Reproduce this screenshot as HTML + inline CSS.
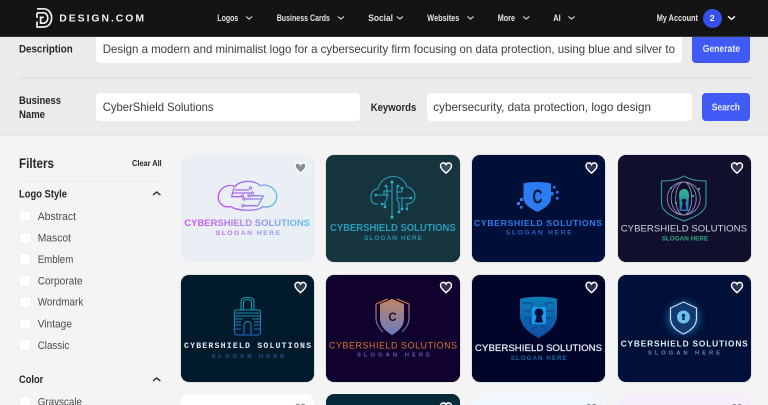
<!DOCTYPE html>
<html><head><meta charset="utf-8">
<style>
*{box-sizing:border-box;margin:0;padding:0}
html,body{width:768px;height:405px;overflow:hidden;background:#f4f4f4;font-family:"Liberation Sans",sans-serif}
#root{position:relative;width:768px;height:405px;overflow:hidden;background:#f4f4f4}
.a{position:absolute;white-space:nowrap}
#top{position:absolute;left:0;top:0;width:768px;height:136px;background:#ebebeb;border-bottom:1px solid #e4e4e4}
#nav{position:absolute;left:0;top:0;width:768px;height:36.500px;background:#141414;border-bottom:1px solid #333}
.in{position:absolute;background:#fff;border-radius:4px}
.bt{position:absolute;background:#3f5af5;border-radius:4px}
.cb{position:absolute;left:19px;width:12px;height:12px;background:#fff;border:1px solid #eee;border-radius:2px}
.c{position:absolute;border-radius:8px;width:134px;height:107px;box-shadow:0 0 0 .5px rgba(120,120,130,.3)}
.c3{height:11px;border-radius:8px 8px 0 0}
svg{position:absolute;left:0;top:0;width:768px;height:405px;overflow:hidden}
text{font-family:"Liberation Sans",sans-serif;font-weight:bold}
.r{font-weight:normal}
.ip{font-size:12px;fill:#3c3c3c;font-weight:normal}
.nv{font-size:8.800px;fill:#e4e4e4}
.lb{font-size:11px;fill:#262626}
.ft{font-size:10.800px;fill:#4c4c4c;font-weight:normal}
</style></head><body>
<div id="root">
<div id="top"></div>
<div class="in" style="left:96px;top:33px;width:586px;height:29.500px"></div>
<div class="bt" style="left:692px;top:33px;width:58px;height:29.500px"></div>
<div class="a" style="left:19px;top:77px;width:731px;height:2px;background:#e2e2e2"></div>
<div class="in" style="left:96px;top:93px;width:264px;height:27.500px"></div>
<div class="in" style="left:426.500px;top:93px;width:265px;height:27.500px"></div>
<div class="bt" style="left:701.500px;top:93px;width:48.500px;height:27.500px"></div>
<div id="nav"></div>
<div class="a" style="left:703px;top:8.500px;width:19px;height:19px;border-radius:50%;background:#3650ec"></div>
<div class="a" style="left:19px;top:181px;width:143px;height:1px;background:#ebebeb"></div>
<div class="cb" style="top:210px"></div>
<div class="cb" style="top:232px"></div>
<div class="cb" style="top:253px"></div>
<div class="cb" style="top:275px"></div>
<div class="cb" style="top:296px"></div>
<div class="cb" style="top:318px"></div>
<div class="cb" style="top:339px"></div>
<div class="cb" style="top:396px;height:9px;border-bottom:0;border-radius:2px 2px 0 0"></div>

<div class="c" style="left:181px;top:155px;background:#e9eff5;box-shadow:none"></div>
<div class="c" style="left:326px;top:155px;background:#15343e"></div>
<div class="c" style="left:472px;top:155px;background:#000f38;width:133px"></div>
<div class="c" style="left:618px;top:155px;background:#11102c;width:133px"></div>
<div class="c" style="left:181px;top:275px;background:#021b2c;width:133px"></div>
<div class="c" style="left:326px;top:275px;background:#10012e"></div>
<div class="c" style="left:472px;top:275px;background:#010529;width:133px"></div>
<div class="c" style="left:618px;top:275px;background:#001038;width:133px"></div>
<div class="c c3" style="left:181px;top:394px;background:#fff;width:133px;box-shadow:none"></div>
<div class="c c3" style="left:326px;top:394px;background:#062a3a;box-shadow:none"></div>
<div class="c c3" style="left:472px;top:394px;background:#eef8fe;width:133px;box-shadow:none"></div>
<div class="c c3" style="left:618px;top:394px;background:#f6edfb;width:133px;box-shadow:none"></div>

<svg width="768" height="405" viewBox="0 0 768 405" fill="none">
<defs>
<linearGradient id="g1" gradientUnits="userSpaceOnUse" x1="184" y1="0" x2="310" y2="0"><stop offset="0" stop-color="#d84ff5"/><stop offset=".5" stop-color="#a98bf0"/><stop offset="1" stop-color="#5cc4ea"/></linearGradient>
<linearGradient id="g2" gradientUnits="userSpaceOnUse" x1="218" y1="0" x2="277" y2="0"><stop offset="0" stop-color="#c84cf5"/><stop offset=".55" stop-color="#9a70f2"/><stop offset="1" stop-color="#58c4ea"/></linearGradient>
<linearGradient id="g3" gradientUnits="userSpaceOnUse" x1="0" y1="297" x2="0" y2="335"><stop offset="0" stop-color="#0ea5a8"/><stop offset="1" stop-color="#2468c0"/></linearGradient>
<linearGradient id="g4" gradientUnits="userSpaceOnUse" x1="0" y1="300" x2="0" y2="335"><stop offset="0" stop-color="#e0803a"/><stop offset="1" stop-color="#3c70d8"/></linearGradient>
<linearGradient id="g5" gradientUnits="userSpaceOnUse" x1="0" y1="296" x2="0" y2="338"><stop offset="0" stop-color="#0d7fb8"/><stop offset="1" stop-color="#0f4ea8"/></linearGradient>
<linearGradient id="g6" gradientUnits="userSpaceOnUse" x1="0" y1="189" x2="0" y2="211"><stop offset="0" stop-color="#32b890"/><stop offset="1" stop-color="#2a70c0"/></linearGradient>
<radialGradient id="g7" cx=".5" cy=".5" r=".5"><stop offset=".55" stop-color="#1c7fd0" stop-opacity=".55"/><stop offset="1" stop-color="#001038" stop-opacity="0"/></radialGradient>
<path id="h" transform="scale(.95)" d="M0 5.400C-1.200 4.200-5.800 1.200-5.800-2.200-5.800-4.200-4.300-5.400-2.800-5.400-1.500-5.400-.5-4.700 0-3.600 .5-4.700 1.500-5.400 2.800-5.400 4.300-5.400 5.800-4.200 5.800-2.200 5.800 1.200 1.200 4.200 0 5.400Z"/>
</defs>

<!-- search form text -->
<text x="19" y="52.500" class="lb" textLength="53.700" lengthAdjust="spacingAndGlyphs">Description</text>
<text x="19" y="104" class="lb" textLength="42" lengthAdjust="spacingAndGlyphs">Business</text>
<text x="19" y="118" class="lb" textLength="26" lengthAdjust="spacingAndGlyphs">Name</text>
<text x="370.700" y="111" class="lb" textLength="45.600" lengthAdjust="spacingAndGlyphs">Keywords</text>
<text x="102.700" y="53" class="ip" textLength="572.300" lengthAdjust="spacingAndGlyphs">Design a modern and minimalist logo for a cybersecurity firm focusing on data protection, using blue and silver to</text>
<text x="102.700" y="111" class="ip" textLength="110.800" lengthAdjust="spacingAndGlyphs">CyberShield Solutions</text>
<text x="433.300" y="111" class="ip" textLength="217.700" lengthAdjust="spacingAndGlyphs">cybersecurity, data protection, logo design</text>
<text x="702.700" y="52" font-size="9.800" fill="#e8ecff" textLength="37.300" lengthAdjust="spacingAndGlyphs">Generate</text>
<text x="711.700" y="110.500" font-size="9.800" fill="#e8ecff" textLength="28.300" lengthAdjust="spacingAndGlyphs">Search</text>

<!-- nav text -->
<text x="59.300" y="21.700" font-size="10.400" fill="#f2f2f2" textLength="84.700">DESIGN.COM</text>
<text x="217.300" y="20.800" class="nv" textLength="21" lengthAdjust="spacingAndGlyphs">Logos</text>
<text x="276.700" y="20.800" class="nv" textLength="53.300" lengthAdjust="spacingAndGlyphs">Business Cards</text>
<text x="368.300" y="20.800" class="nv" textLength="24.700" lengthAdjust="spacingAndGlyphs">Social</text>
<text x="427.300" y="20.800" class="nv" textLength="32" lengthAdjust="spacingAndGlyphs">Websites</text>
<text x="497.700" y="20.800" class="nv" textLength="17.300" lengthAdjust="spacingAndGlyphs">More</text>
<text x="553.300" y="20.800" class="nv" textLength="7.400" lengthAdjust="spacingAndGlyphs">AI</text>
<text x="656.700" y="20.800" class="nv" textLength="41.300" lengthAdjust="spacingAndGlyphs">My Account</text>
<text x="712.300" y="21" font-size="8.500" fill="#fff" text-anchor="middle">2</text>

<!-- sidebar text -->
<text x="19" y="168" font-size="13.500" fill="#262626" textLength="35" lengthAdjust="spacingAndGlyphs">Filters</text>
<text x="132" y="166" font-size="7.800" fill="#262626" textLength="29.700" lengthAdjust="spacingAndGlyphs">Clear All</text>
<text x="19" y="197.500" class="lb" textLength="48" lengthAdjust="spacingAndGlyphs">Logo Style</text>
<text x="37.700" y="220" class="ft" textLength="38.300" lengthAdjust="spacingAndGlyphs">Abstract</text>
<text x="37.700" y="241.500" class="ft" textLength="33.300" lengthAdjust="spacingAndGlyphs">Mascot</text>
<text x="37.700" y="263" class="ft" textLength="35.600" lengthAdjust="spacingAndGlyphs">Emblem</text>
<text x="37.700" y="284.300" class="ft" textLength="45" lengthAdjust="spacingAndGlyphs">Corporate</text>
<text x="37.700" y="305.700" class="ft" textLength="45.600" lengthAdjust="spacingAndGlyphs">Wordmark</text>
<text x="37.700" y="327.500" class="ft" textLength="34.300" lengthAdjust="spacingAndGlyphs">Vintage</text>
<text x="37.700" y="349" class="ft" textLength="31.600" lengthAdjust="spacingAndGlyphs">Classic</text>
<text x="19" y="383" class="lb" textLength="24.300" lengthAdjust="spacingAndGlyphs">Color</text>
<text x="37.700" y="405.500" class="ft" textLength="44.300" lengthAdjust="spacingAndGlyphs">Grayscale</text>

<!-- header logo -->
<g stroke="#f2f2f2" stroke-width="1.700">
<path d="M37 8.800H43.500C48.600 8.800 51.600 13 51.600 18S48.600 27 43.500 27H37V21.500"/>
<path d="M37 12.800H43.200C46 12.800 47.800 15.200 47.800 18S46 23.200 43.200 23.200H40.600V17.400H43.800"/>
<path d="M37 13V18"/>
</g>
<!-- nav chevrons -->
<g stroke="#e4e4e4" stroke-width="1.100">
<path d="M246 16.500l3.100 2.500 3.100-2.500"/><path d="M337.800 16.500l3.100 2.500 3.100-2.500"/><path d="M396.800 16.500l3.100 2.500 3.100-2.500"/><path d="M467.400 16.500l3.100 2.500 3.100-2.500"/><path d="M523.200 16.500l3.100 2.500 3.100-2.500"/><path d="M568.400 16.500l3.100 2.500 3.100-2.500"/>
<path d="M728 16.300l3.500 3 3.500-3" stroke-width="1.400" stroke="#f2f2f2"/>
</g>
<!-- filter chevrons -->
<g stroke="#262626" stroke-width="1.400">
<path d="M153 195l3.700-3 3.700 3"/><path d="M153 381l3.700-3 3.700 3"/>
</g>

<!-- card 1 -->
<g stroke="url(#g2)" stroke-width="1.300">
<path d="M235 186.700C228 183 220 188 218.500 195C217 203 224 208.500 231 206.500C236 211 257 212 263 206.500C271 208.500 277 203 276.700 196C276.500 189 268 183 260 185.700C256 180.500 241 179 235 186.700Z"/>
<path d="M235 190H249M232 193H251M231.500 196.700L234 188M231.500 196.700H241"/>
<path d="M263.500 195.700H250M262 199H245M258 205.700L263.500 195.700M258 205.700H244"/>
</g>
<g stroke="url(#g2)" stroke-width="1">
<circle cx="250.500" cy="188" r="1.100"/><circle cx="252.500" cy="193" r="1.100"/><circle cx="242.500" cy="196" r="1.100"/><circle cx="249" cy="195.700" r="1.100"/><circle cx="244" cy="199" r="1.100"/><circle cx="243" cy="205.700" r="1.100"/>
</g>
<text x="184.300" y="226" font-size="9.200" textLength="125.700" lengthAdjust="spacingAndGlyphs" fill="url(#g1)">CYBERSHIELD SOLUTIONS</text>
<text x="215.700" y="235" font-size="6.800" textLength="64.500" fill="url(#g1)">SLOGAN HERE</text>

<!-- card 2 -->
<g stroke="#2a9dbb" stroke-width="1.100">
<path d="M378 204H376C371 204 370.800 198 371 196C371.500 191 375 189 378 189C379 182 386 176.500 393 176.500C400 176.500 405.500 181 407 187C412 188 415 192 415 196C415 201 411 204 407 204"/>
<path d="M392 183V215M397 187V200L399 203V211M387 187V199L385 202V206M392 191H384V195M376 195H389M397 192H402V188M397 198H411M402 198V208M382 204H386M407 203V208"/>
</g>
<g fill="#2fb0c8">
<circle cx="392" cy="182" r="1.500"/><circle cx="392" cy="217" r="1.600"/><circle cx="386" cy="186" r="1.300"/><circle cx="398" cy="186" r="1.300"/><circle cx="402" cy="188" r="1.300"/><circle cx="376" cy="195" r="1.300"/><circle cx="411" cy="198" r="1.300"/><circle cx="385" cy="207" r="1.400"/><circle cx="399" cy="212" r="1.400"/><circle cx="402" cy="209" r="1.400"/><circle cx="407" cy="209" r="1.300"/><circle cx="382" cy="204" r="1.300"/>
</g>
<text x="330" y="231" font-size="9.800" textLength="125.700" lengthAdjust="spacingAndGlyphs" fill="#2a9dbb">CYBERSHIELD SOLUTIONS</text>
<text x="364" y="240" font-size="6.600" textLength="58" fill="#2a8fab">SLOGAN HERE</text>

<!-- card 3 -->
<path d="M523.500 183.500C531 181.500 543 181.500 551 183.500V198C551 205 543 209 537.500 212C532 209 523.500 205 523.500 198Z" fill="#2a7cf0"/>
<text x="532.500" y="203.300" font-size="20" fill="#071a44" textLength="10" lengthAdjust="spacingAndGlyphs">C</text>
<g fill="#2a7cf0">
<rect x="520" y="198" width="3" height="3"/><rect x="517" y="202" width="3" height="3"/><rect x="520" y="206" width="2.500" height="2.500"/><rect x="550" y="192" width="3.500" height="3.500"/><rect x="553" y="186" width="2.500" height="2.500"/><rect x="556" y="191" width="2.500" height="2.500"/><rect x="556" y="197" width="2.500" height="2.500"/>
</g>
<text x="474" y="226" font-size="8.600" textLength="128" fill="#2a7cf0">CYBERSHIELD SOLUTIONS</text>
<text x="505.700" y="234.500" font-size="6.800" textLength="66" fill="#2a62c0">SLOGAN HERE</text>

<!-- card 4 -->
<path d="M684 176C690 180 698 181 706 181V203C706 212 695 217 684 221C673 217 661.500 212 661.500 203V181C670 181 678 180 684 176Z" stroke="#2f8f98" stroke-width="1.200"/>
<g stroke="#9a96c8" stroke-width=".8">
<circle cx="683.700" cy="198.500" r="16.500"/><ellipse cx="683.700" cy="198.500" rx="12.500" ry="16.500"/><ellipse cx="683.700" cy="198.500" rx="8" ry="16.500"/>
</g>
<path d="M684 189C687.500 189 689 192 689 195C689 199 688 203 688.500 211H679.500C680 203 679 199 679 195C679 192 680.500 189 684 189Z" fill="url(#g6)"/>
<path d="M684 198.500a2.300 2.300 0 0 1 1.300 4.200L686.500 209.500H681.500L682.700 202.700A2.300 2.300 0 0 1 684 198.500Z" fill="#11102c"/>
<g fill="#2fa890"><circle cx="671" cy="188" r="1.200"/><circle cx="699" cy="189" r="1.200"/><circle cx="676" cy="203" r="1.200"/><circle cx="693" cy="196" r="1.200"/></g>
<text x="620.700" y="231.500" font-size="9.600" class="r" textLength="126.300" fill="#d0d0dc">CYBERSHIELD SOLUTIONS</text>
<text x="661.700" y="240.500" font-size="6.400" textLength="46.500" lengthAdjust="spacingAndGlyphs" fill="#2fa880">SLOGAN HERE</text>

<!-- card 5 -->
<g stroke="url(#g3)" stroke-width="1.100">
<path d="M241 310V302C241 299 243 297.500 247.500 297.500C252 297.500 254 299 254 302V310M243.500 310V302.500C243.500 300.500 245 299.500 247.500 299.500C250 299.500 251.500 300.500 251.500 302.500V310"/>
<path d="M236 310H259Q260.500 310 260.500 312V332Q260.500 335 257 335H238Q234.500 335 234.500 332V312Q234.500 310 236 310Z"/>
<path d="M236 313H259M235 316H260M235 319H243M252 319H260M234 322H241M254 322H261M234 325H241M254 325H261M235 329H241M254 329H260M244 335V325a3.500 3.500 0 1 1 7 0V335"/>
</g>
<text x="184" y="348" font-size="8.200" textLength="127" fill="#dfe7ee" style="font-family:'Liberation Mono',monospace">CYBERSHIELD SOLUTIONS</text>
<text x="211.700" y="358" font-size="5.600" textLength="72.300" fill="#24548a">SLOGAN HERE</text>

<!-- card 6 -->
<path d="M380 304L392 299L404 304V318C404 326 399 331 392 335C385 331 380 326 380 318Z" fill="#9a8a9c"/>
<path d="M380 304L392 299L404 304V318C404 326 399 331 392 335C385 331 380 326 380 318Z" fill="url(#g4)" opacity=".55"/>
<g stroke="url(#g4)" stroke-width="1.200">
<path d="M376 304L388 299M409 304L397 299M376 304V318C376 324 379 328 383 332M409 304V318C409 324 406 328 402 332"/>
</g>
<text x="392.500" y="321" font-size="11.500" text-anchor="middle" fill="#1a0e30">C</text>
<text x="329" y="348.500" font-size="8.800" textLength="128" fill="#d87a30" class="r">CYBERSHIELD SOLUTIONS</text>
<text x="357" y="356.500" font-size="5.800" textLength="73" fill="#5a66b8">SLOGAN HERE</text>

<!-- card 7 -->
<path d="M520 299C527 296 550 296 557 299V315C557 326 548 333 538.500 338C529 333 520 326 520 315Z" fill="url(#g5)"/>
<g stroke="#063a78" stroke-width=".8"><path d="M523 303H532V308M553 303H546V307M524 318H530V324M553 318H546V324M532 330L537 326M546 329L541 325M524 311H531M546 311H554"/></g>
<rect x="532" y="307" width="14" height="17" fill="#1a9ae8"/>
<path d="M539 308.500a4.200 4.200 0 0 1 2.500 7.600L543 322.500H535L536.500 316.100A4.200 4.200 0 0 1 539 308.500Z" fill="#031038"/>
<text x="475" y="351" font-size="9.600" textLength="127" fill="#e8eef2" class="r" stroke="#e8eef2" stroke-width=".25">CYBERSHIELD SOLUTIONS</text>
<text x="510.700" y="360" font-size="6.200" textLength="56" fill="#0c6ea8">SLOGAN HERE</text>

<!-- card 8 -->
<circle cx="683.500" cy="318" r="24" fill="url(#g7)"/>
<path d="M683.500 302L696.500 308V318C696.500 326 690 331 683.500 334C677 331 670.500 326 670.500 318V308Z" fill="#123a70" stroke="#c8dde8" stroke-width="1.200"/>
<circle cx="683.500" cy="317" r="6.500" fill="#6cc0ea"/>
<circle cx="683.500" cy="315.500" r="1.700" fill="#0c2a58"/><path d="M682.700 316H684.300L684.800 320H682.200Z" fill="#0c2a58"/>
<text x="620.700" y="346.500" font-size="8.300" textLength="127" fill="#e6ecf4">CYBERSHIELD SOLUTIONS</text>
<text x="648" y="354.500" font-size="5.800" textLength="72" fill="#6c8cb0">SLOGAN HERE</text>

<!-- hearts -->
<g stroke="#fff" stroke-width="1.500">
<use href="#h" x="300.500" y="168" fill="#8f8f95"/>
<use href="#h" x="446" y="168" fill="#3a5058"/>
<use href="#h" x="591.500" y="168" fill="#2c3654"/>
<use href="#h" x="737" y="168" fill="#33324a"/>
<use href="#h" x="300.500" y="287.500" fill="#2e3f4c"/>
<use href="#h" x="446" y="287.500" fill="#362a4c"/>
<use href="#h" x="591.500" y="287.500" fill="#2e3048"/>
<use href="#h" x="737" y="287.500" fill="#2c3654"/>
<use href="#h" x="300.500" y="408" fill="#8f8f95"/>
<use href="#h" x="446" y="408" fill="#3a5058"/>
<use href="#h" x="591.500" y="408" fill="#8f8f95"/>
<use href="#h" x="737" y="408" fill="#8f8f95"/>
</g>
</svg>
</div>
</body></html>
